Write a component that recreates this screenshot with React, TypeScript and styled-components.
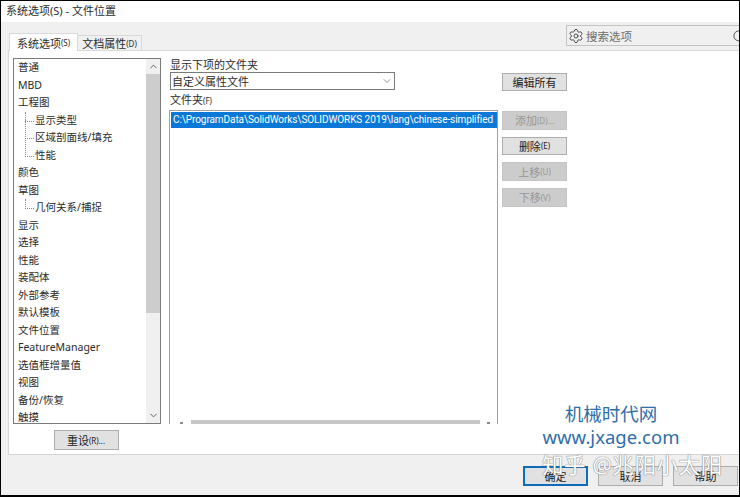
import React from "react";
import styled, { createGlobalStyle } from "styled-components";
import { ChevronDown, ChevronUp, Search, Settings } from "lucide-react";

const GlobalStyle = createGlobalStyle`
	html, body {
		margin: 0;
		padding: 0;
		background: #fff;
	}
	* {
		box-sizing: border-box;
	}
`;

const Dialog = styled.div`
	position: relative;
	width: 740px;
	height: 497px;
	overflow: hidden;
	display: flex;
	flex-direction: column;
	background: #f0f0f0;
	border: 1px solid #000;
	border-bottom-width: 2px;
	color: #2b2b2b;
	font-family: "Noto Sans", "Noto Sans CJK SC", sans-serif;
	font-size: 11px;
`;

const TitleBar = styled.div`
	height: 21px;
	flex: none;
	background: #fff;
	padding: 0 0 3px 5px;
	display: flex;
	align-items: center;
`;

const TabRow = styled.div`
	height: 28px;
	flex: none;
	display: flex;
	align-items: flex-end;
	justify-content: space-between;
	padding-left: 8px;
`;

const Tabs = styled.div`
	display: flex;
	align-items: flex-end;
	margin-bottom: -1px;
	position: relative;
`;

const Tab = styled.div<{ $active?: boolean }>`
	height: ${(p) => (p.$active ? 18 : 16)}px;
	width: ${(p) => (p.$active ? 69 : 65)}px;
	display: flex;
	align-items: center;
	justify-content: center;
	background: ${(p) => (p.$active ? "#fff" : "#f0f0f0")};
	border: 1px solid #d9d9d9;
	border-bottom: ${(p) => (p.$active ? "none" : "1px solid #d9d9d9")};
	margin-left: ${(p) => (p.$active ? 0 : -1)}px;
`;

const Hot = styled.span`
	font-size: 8px;
`;

const SearchBox = styled.div`
	width: 173px;
	height: 21px;
	margin-bottom: 4px;
	display: flex;
	align-items: center;
	gap: 2px;
	padding-left: 1px;
	background: #f0f0f0;
	border: 1px solid #c4c4c4;
	border-right: none;
	color: #6e6e6e;
	font-size: 11.5px;
	position: relative;
	overflow: hidden;
`;

const SearchGlass = styled(Search)`
	position: absolute;
	right: -8px;
	top: 3px;
`;

const Panel = styled.div`
	flex: 1;
	margin-left: 7px;
	background: #fff;
	border-top: 1px solid #d9d9d9;
	border-bottom: 1px solid #d4d4d4;
	border-left: 1px solid #d9d9d9;
	padding: 7px 0 3px 4px;
	display: flex;
`;

const LeftColumn = styled.div`
	width: 148px;
	flex: none;
	display: flex;
	flex-direction: column;
	align-items: center;
`;

const TreeBox = styled.div`
	width: 148px;
	height: 366px;
	display: flex;
	border: 1px solid #7a7a7a;
	overflow: hidden;
`;

const Tree = styled.div`
	flex: 1;
	padding: 0 0 0 4px;
	overflow: hidden;
	font-size: 10.5px;
`;

const TreeItem = styled.div<{ $child?: boolean; $first?: boolean }>`
	position: relative;
	height: 17.5px;
	line-height: 17.5px;
	white-space: nowrap;
	padding-left: ${(p) => (p.$child ? 17 : 0)}px;

	${(p) =>
		p.$child &&
		`
		&::before {
			content: "";
			position: absolute;
			left: 7px;
			top: ${p.$first ? 0 : -9}px;
			width: 8px;
			height: ${p.$first ? 9 : 18}px;
			border-left: 1px dotted #8a8a8a;
			border-bottom: 1px dotted #8a8a8a;
		}
	`}
`;

const VScroll = styled.div`
	width: 14px;
	flex: none;
	background: #f0f0f0;
	display: flex;
	flex-direction: column;
	color: #555;
`;

const ScrollArrow = styled.div`
	height: 15px;
	flex: none;
	display: flex;
	align-items: center;
	justify-content: center;
`;

const VThumb = styled.div`
	height: 239px;
	flex: none;
	background: #cdcdcd;
`;

const VRest = styled.div`
	flex: 1;
`;

const Button = styled.div<{ $disabled?: boolean; $primary?: boolean }>`
	width: 65px;
	height: 19px;
	flex: none;
	display: flex;
	align-items: center;
	justify-content: center;
	background: ${(p) => (p.$disabled ? "#cccccc" : "#e1e1e1")};
	border: ${(p) => (p.$primary ? "2px solid #0f6cb8" : "1px solid")};
	border-color: ${(p) =>
		p.$primary ? "#0f6cb8" : p.$disabled ? "#c4c4c4" : "#adadad"};
	color: ${(p) => (p.$disabled ? "#979797" : "#222")};
`;

const ResetButton = styled(Button)`
	height: 20px;
	margin: 6px 2px 0 0;
`;

const MiddleColumn = styled.div`
	width: 329px;
	margin-left: 8px;
	flex: none;
	display: flex;
	flex-direction: column;
`;

const FieldLabel = styled.div`
	height: 14px;
	line-height: 14px;
	padding-left: 1px;
`;

const Select = styled.div`
	width: 225px;
	height: 18px;
	margin: 0 0 3px 1px;
	padding: 0 1px 0 1px;
	display: flex;
	align-items: center;
	justify-content: space-between;
	border: 1px solid #7a7a7a;
	color: #555;
	& > span {
		color: #2b2b2b;
	}
`;

const FolderBox = styled.div`
	margin-top: 3px;
	height: 314px;
	display: flex;
	flex-direction: column;
	border: 1px solid #a0a0a0;
	border-bottom: none;
	padding: 1px 0 0 1px;
`;

const FolderRow = styled.div`
	height: 16px;
	line-height: 16px;
	padding-left: 2px;
	background: #0b78d7;
	color: #fff;
	white-space: nowrap;
	overflow: hidden;
	font-family: Roboto, "Noto Sans", sans-serif;
	font-size: 10px;
	letter-spacing: -0.08px;
`;

const FolderBody = styled.div`
	flex: 1;
`;

const HScroll = styled.div`
	height: 4px;
	flex: none;
	display: flex;
	align-items: flex-end;
	justify-content: space-between;
	padding: 0 7px 0 9px;
`;

const HNub = styled.div`
	width: 3px;
	height: 2px;
	background: #8c8c8c;
`;

const HThumb = styled.div`
	width: 289px;
	height: 4px;
	background: #c6c6c6;
`;

const RightColumn = styled.div`
	margin-left: 4px;
	padding-top: 15px;
	display: flex;
	flex-direction: column;
`;

const EditButton = styled(Button)`
	height: 18px;
	margin-bottom: 20px;
`;

const ActionButton = styled(Button)`
	height: 18.5px;
	margin-bottom: 7.2px;
`;

const Footer = styled.div`
	height: 40px;
	flex: none;
	display: flex;
	justify-content: flex-end;
	gap: 10px;
	padding: 11px 1px 0 0;
`;

const FooterButton = styled(Button)`
	height: 20px;
`;

const Watermark = styled.div`
	position: absolute;
	left: 530px;
	top: 401px;
	width: 160px;
	text-align: center;
	color: #2f6ea8;
	font-size: 18.5px;
	line-height: 23px;
	white-space: nowrap;
`;

const ZhihuMark = styled.div`
	position: absolute;
	left: 541px;
	top: 450px;
	color: #fff;
	font-size: 21.5px;
	line-height: 28px;
	letter-spacing: 0.6px;
	white-space: nowrap;
	text-shadow: 0 0 1px #777, 0 0 1px #777;
`;

const treeItems = [
	{ label: "普通" },
	{ label: "MBD" },
	{ label: "工程图" },
	{ label: "显示类型", child: true, first: true },
	{ label: "区域剖面线/填充", child: true },
	{ label: "性能", child: true },
	{ label: "颜色" },
	{ label: "草图" },
	{ label: "几何关系/捕捉", child: true, first: true },
	{ label: "显示" },
	{ label: "选择" },
	{ label: "性能" },
	{ label: "装配体" },
	{ label: "外部参考" },
	{ label: "默认模板" },
	{ label: "文件位置" },
	{ label: "FeatureManager" },
	{ label: "选值框增量值" },
	{ label: "视图" },
	{ label: "备份/恢复" },
	{ label: "触摸" },
];

function App() {
	return (
		<Dialog>
			<GlobalStyle />
			<TitleBar>系统选项(S) - 文件位置</TitleBar>
			<TabRow>
				<Tabs>
					<Tab $active>
						系统选项<Hot>(S)</Hot>
					</Tab>
					<Tab>
						文档属性<Hot>(D)</Hot>
					</Tab>
				</Tabs>
				<SearchBox>
					<Settings size={16} strokeWidth={1.4} color="#444" />
					搜索选项
					<SearchGlass size={15} strokeWidth={1.4} color="#444" />
				</SearchBox>
			</TabRow>
			<Panel>
				<LeftColumn>
					<TreeBox>
						<Tree>
							{treeItems.map((item, i) => (
								<TreeItem key={i} $child={item.child} $first={item.first}>
									{item.label}
								</TreeItem>
							))}
						</Tree>
						<VScroll>
							<ScrollArrow>
								<ChevronUp size={11} strokeWidth={2} />
							</ScrollArrow>
							<VThumb />
							<VRest />
							<ScrollArrow>
								<ChevronDown size={11} strokeWidth={2} />
							</ScrollArrow>
						</VScroll>
					</TreeBox>
					<ResetButton>
						重设<Hot>(R)...</Hot>
					</ResetButton>
				</LeftColumn>
				<MiddleColumn>
					<FieldLabel>显示下项的文件夹</FieldLabel>
					<Select>
						<span>自定义属性文件</span>
						<ChevronDown size={12} strokeWidth={1.2} />
					</Select>
					<FieldLabel>
						文件夹<Hot>(F)</Hot>
					</FieldLabel>
					<FolderBox>
						<FolderRow>
							C:\ProgramData\SolidWorks\SOLIDWORKS 2019\lang\chinese-simplified
						</FolderRow>
						<FolderBody />
						<HScroll>
							<HNub />
							<HThumb />
							<HNub />
						</HScroll>
					</FolderBox>
				</MiddleColumn>
				<RightColumn>
					<EditButton>编辑所有</EditButton>
					<ActionButton $disabled>
						添加<Hot>(D)...</Hot>
					</ActionButton>
					<ActionButton>
						删除<Hot>(E)</Hot>
					</ActionButton>
					<ActionButton $disabled>
						上移<Hot>(U)</Hot>
					</ActionButton>
					<ActionButton $disabled>
						下移<Hot>(V)</Hot>
					</ActionButton>
				</RightColumn>
			</Panel>
			<Footer>
				<FooterButton $primary>确定</FooterButton>
				<FooterButton>取消</FooterButton>
				<FooterButton>帮助</FooterButton>
			</Footer>
			<Watermark>
				机械时代网
				<br />
				www.jxage.com
			</Watermark>
			<ZhihuMark>知乎 @兆阳小太阳</ZhihuMark>
		</Dialog>
	);
}

export default App;
